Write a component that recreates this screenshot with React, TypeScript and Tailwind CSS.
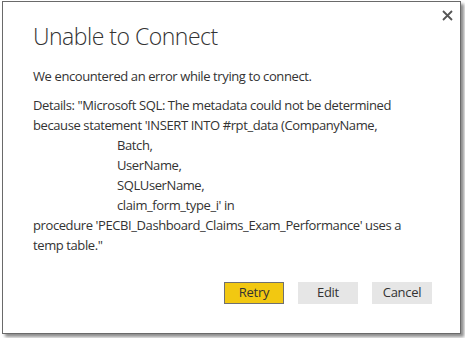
import React from 'react';

const App: React.FC = () => {
  return (
    <div className="w-[465px] h-[338px] bg-white pt-[1px] pl-[2px]" style={{ fontFamily: '"Open Sans", "Noto Sans", sans-serif' }}>
      <div className="relative w-[459px] h-[333px] border border-[#6a6a6a] bg-white shadow-[3px_3px_3px_rgba(0,0,0,0.45)] text-[#333333]">
        <button className="absolute right-[5px] top-[5px] w-[16px] h-[16px] flex items-center justify-center">
          <svg width="11" height="11" viewBox="0 0 11 11">
            <path d="M1 1L10 10M10 1L1 10" stroke="#555" strokeWidth="1.8" />
          </svg>
        </button>
        <div className="pl-[30px] pr-[20px]">
          <h1 className="pt-[18px] text-[23px] font-light leading-[32px] tracking-[-0.5px] text-[#333]">Unable to Connect</h1>
          <div className="text-[13px] leading-[20px] tracking-[-0.4px]">
            <p className="mt-[14px]">We encountered an error while trying to connect.</p>
            <div className="mt-[9px]">
              <div>Details: "Microsoft SQL: The metadata could not be determined</div>
              <div>because statement 'INSERT INTO #rpt_data (CompanyName,</div>
              <div className="pl-[84px]">Batch,</div>
              <div className="pl-[84px]">UserName,</div>
              <div className="pl-[84px]">SQLUserName,</div>
              <div className="pl-[84px]">claim_form_type_i' in</div>
              <div>procedure 'PECBI_Dashboard_Claims_Exam_Performance' uses a</div>
              <div>temp table."</div>
            </div>
          </div>
        </div>
        <div className="absolute right-[28px] top-[280px] flex gap-[14px] text-[13px] tracking-[-0.3px]">
          <button className="w-[60px] h-[22px] border border-[#707070] bg-[#f2c811] text-[#333]">Retry</button>
          <button className="w-[60px] h-[22px] bg-[#e6e6e6] text-[#333]">Edit</button>
          <button className="w-[60px] h-[22px] bg-[#e6e6e6] text-[#333]">Cancel</button>
        </div>
      </div>
    </div>
  );
};

export default App;
